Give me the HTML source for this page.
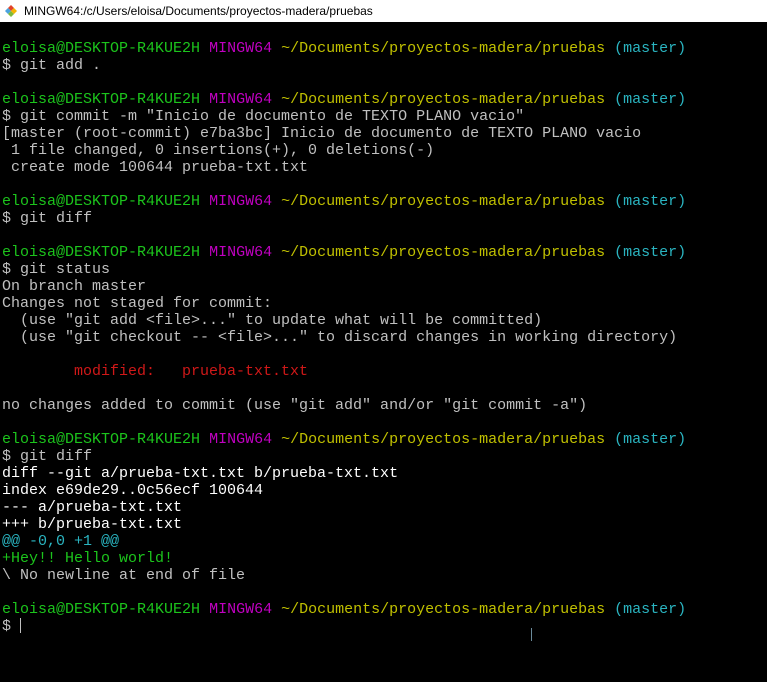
<!DOCTYPE html>
<html><head><meta charset="utf-8"><style>
body{margin:0;width:767px;height:682px;background:#000;overflow:hidden;position:relative}
.t{position:absolute;left:0;top:0;width:767px;height:22px;background:#fff;font-family:"Liberation Sans",sans-serif;font-size:12px;color:#000;line-height:22px}
.t span{position:absolute;left:24px;top:0}
pre{position:absolute;left:2px;top:40px;margin:0;font-family:"Liberation Mono",monospace;font-size:15px;line-height:17px;color:#c0c0c0}
.g{color:#1cc41c}.m{color:#c000c0}.y{color:#c0c000}.c{color:#2ab4c0}.r{color:#d01818}.w{color:#fff}
</style></head><body>
<div class="t"><svg style="position:absolute;left:4px;top:4px" width="14" height="14" viewBox="0 0 14 14"><path d="M7 1L13 7L7 13L1 7Z" fill="#e9e9e9"/><path d="M7 1L10 4L7 7L4 4Z" fill="#e24329"/><path d="M1 7L4 4L7 7L4 10Z" fill="#4aa3df"/><path d="M7 7L10 10L7 13L4 10Z" fill="#7dbb3a"/><path d="M13 7L10 10L7 7L10 4Z" fill="#f5b400"/></svg><span>MINGW64:/c/Users/eloisa/Documents/proyectos-madera/pruebas</span></div>
<pre><span class="g">eloisa@DESKTOP-R4KUE2H</span> <span class="m">MINGW64</span> <span class="y">~/Documents/proyectos-madera/pruebas</span> <span class="c">(master)</span>
$ git add .

<span class="g">eloisa@DESKTOP-R4KUE2H</span> <span class="m">MINGW64</span> <span class="y">~/Documents/proyectos-madera/pruebas</span> <span class="c">(master)</span>
$ git commit -m "Inicio de documento de TEXTO PLANO vacio"
[master (root-commit) e7ba3bc] Inicio de documento de TEXTO PLANO vacio
 1 file changed, 0 insertions(+), 0 deletions(-)
 create mode 100644 prueba-txt.txt

<span class="g">eloisa@DESKTOP-R4KUE2H</span> <span class="m">MINGW64</span> <span class="y">~/Documents/proyectos-madera/pruebas</span> <span class="c">(master)</span>
$ git diff

<span class="g">eloisa@DESKTOP-R4KUE2H</span> <span class="m">MINGW64</span> <span class="y">~/Documents/proyectos-madera/pruebas</span> <span class="c">(master)</span>
$ git status
On branch master
Changes not staged for commit:
  (use "git add &lt;file&gt;..." to update what will be committed)
  (use "git checkout -- &lt;file&gt;..." to discard changes in working directory)

        <span class="r">modified:   prueba-txt.txt</span>

no changes added to commit (use "git add" and/or "git commit -a")

<span class="g">eloisa@DESKTOP-R4KUE2H</span> <span class="m">MINGW64</span> <span class="y">~/Documents/proyectos-madera/pruebas</span> <span class="c">(master)</span>
$ git diff
<span class="w">diff --git a/prueba-txt.txt b/prueba-txt.txt
index e69de29..0c56ecf 100644
--- a/prueba-txt.txt
+++ b/prueba-txt.txt</span>
<span class="c">@@ -0,0 +1 @@</span>
<span class="g">+Hey!! Hello world!</span>
\ No newline at end of file

<span class="g">eloisa@DESKTOP-R4KUE2H</span> <span class="m">MINGW64</span> <span class="y">~/Documents/proyectos-madera/pruebas</span> <span class="c">(master)</span>
$ <span style="display:inline-block;width:1px;height:15px;background:#c0c0c0;vertical-align:-3px"></span>
</pre>
<div style="position:absolute;left:531px;top:628px;width:1px;height:13px;background:#6a8a9a"></div>
</body></html>
